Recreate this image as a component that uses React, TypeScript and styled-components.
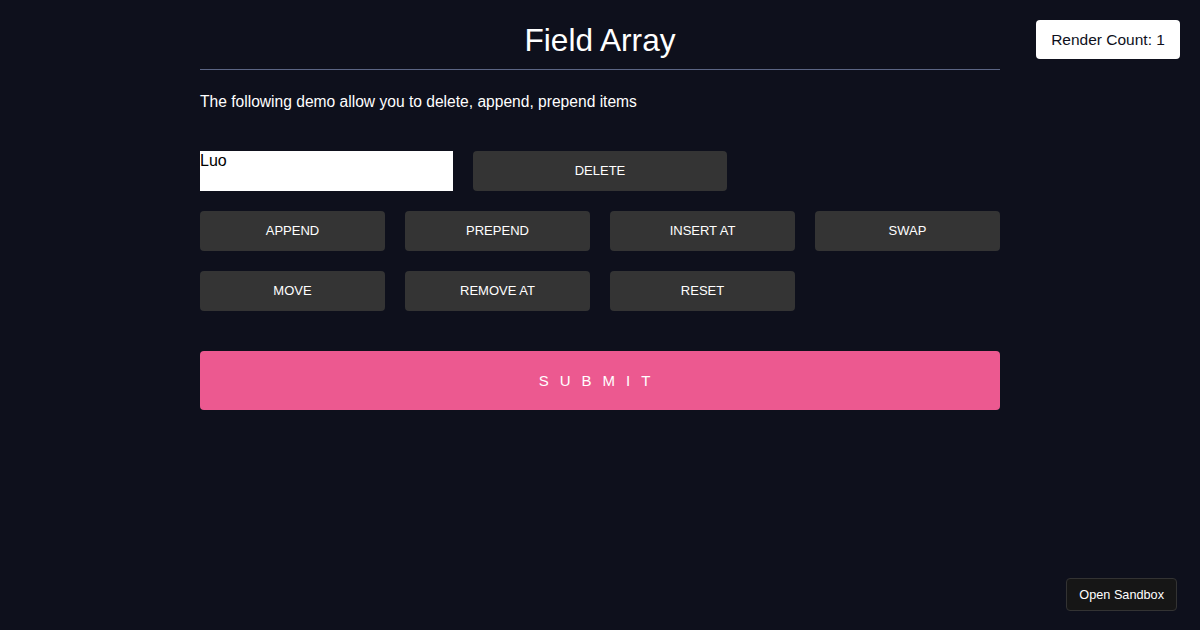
import React from "react";
import styled, { createGlobalStyle } from "styled-components";

const Global = createGlobalStyle`
  html, body { margin: 0; padding: 0; background: #0e101c; }
  body { font-family: "Liberation Sans", Arial, sans-serif; color: #fff; }
  * { box-sizing: border-box; }
`;

const Page = styled.div`
  min-height: 630px;
  background: #0e101c;
`;

const Container = styled.div`
  width: 800px;
  margin: 0 auto;
  padding-top: 20px;
`;

const Header = styled.header`
  border-bottom: 1px solid #5b6584;
  padding-bottom: 9px;
`;

const Title = styled.h1`
  margin: 0;
  font-size: 31.6px;
  font-weight: 400;
  line-height: 40px;
  text-align: center;
  color: #fff;
`;

const Intro = styled.p`
  margin: 22px 0 39px;
  font-size: 15.6px;
  line-height: 20px;
  color: #fff;
`;

const Form = styled.form`
  display: flex;
  flex-direction: column;
  gap: 20px;
`;

const Row = styled.div<{ $cols: number }>`
  display: grid;
  grid-template-columns: repeat(${(p) => p.$cols}, 1fr);
  gap: 20px;
`;

const TextInput = styled.input`
  height: 40px;
  border: none;
  border-radius: 0;
  background: #fff;
  color: #000;
  font-family: "Liberation Sans", Arial, sans-serif;
  font-size: 16px;
  padding: 0 0 21px 0;
  margin: 0;
  outline: none;
`;

const Button = styled.button`
  height: 40px;
  border: none;
  border-radius: 4px;
  background: #343434;
  color: #fff;
  font-family: "Liberation Sans", Arial, sans-serif;
  font-size: 13px;
  text-transform: uppercase;
  cursor: pointer;
  padding: 0 0 2px 0;
`;

const Submit = styled.button`
  margin-top: 20px;
  height: 59px;
  border: none;
  border-radius: 4px;
  background: #ec5990;
  color: #fff;
  font-family: "Liberation Sans", Arial, sans-serif;
  font-size: 15px;
  letter-spacing: 11px;
  text-transform: uppercase;
  padding: 0 0 1px 0;
  cursor: pointer;
`;

const RenderCount = styled.div`
  position: fixed;
  top: 20px;
  right: 20px;
  width: 144px;
  height: 39px;
  background: #fff;
  color: #0e101c;
  border-radius: 4px;
  font-size: 15.5px;
  display: flex;
  align-items: center;
  justify-content: center;
`;

const Sandbox = styled.a`
  position: fixed;
  right: 23px;
  bottom: 19px;
  height: 33px;
  padding: 0 12px;
  display: flex;
  align-items: center;
  background: #161616;
  border: 1px solid #333;
  border-radius: 4px;
  color: #fff;
  font-size: 12.7px;
  text-decoration: none;
`;

export default function App() {
  return (
    <Page>
      <Global />
      <Container>
        <Header>
          <Title>Field Array</Title>
        </Header>
        <Intro>The following demo allow you to delete, append, prepend items</Intro>
        <Form onSubmit={(e) => e.preventDefault()}>
          <Row $cols={3}>
            <TextInput defaultValue="Luo" />
            <Button type="button">Delete</Button>
          </Row>
          <Row $cols={4}>
            <Button type="button">append</Button>
            <Button type="button">prepend</Button>
            <Button type="button">insert at</Button>
            <Button type="button">swap</Button>
          </Row>
          <Row $cols={4}>
            <Button type="button">move</Button>
            <Button type="button">remove at</Button>
            <Button type="button">reset</Button>
          </Row>
          <Submit type="submit">Submit</Submit>
        </Form>
      </Container>
      <RenderCount>Render Count: 1</RenderCount>
      <Sandbox href="#">Open Sandbox</Sandbox>
    </Page>
  );
}
